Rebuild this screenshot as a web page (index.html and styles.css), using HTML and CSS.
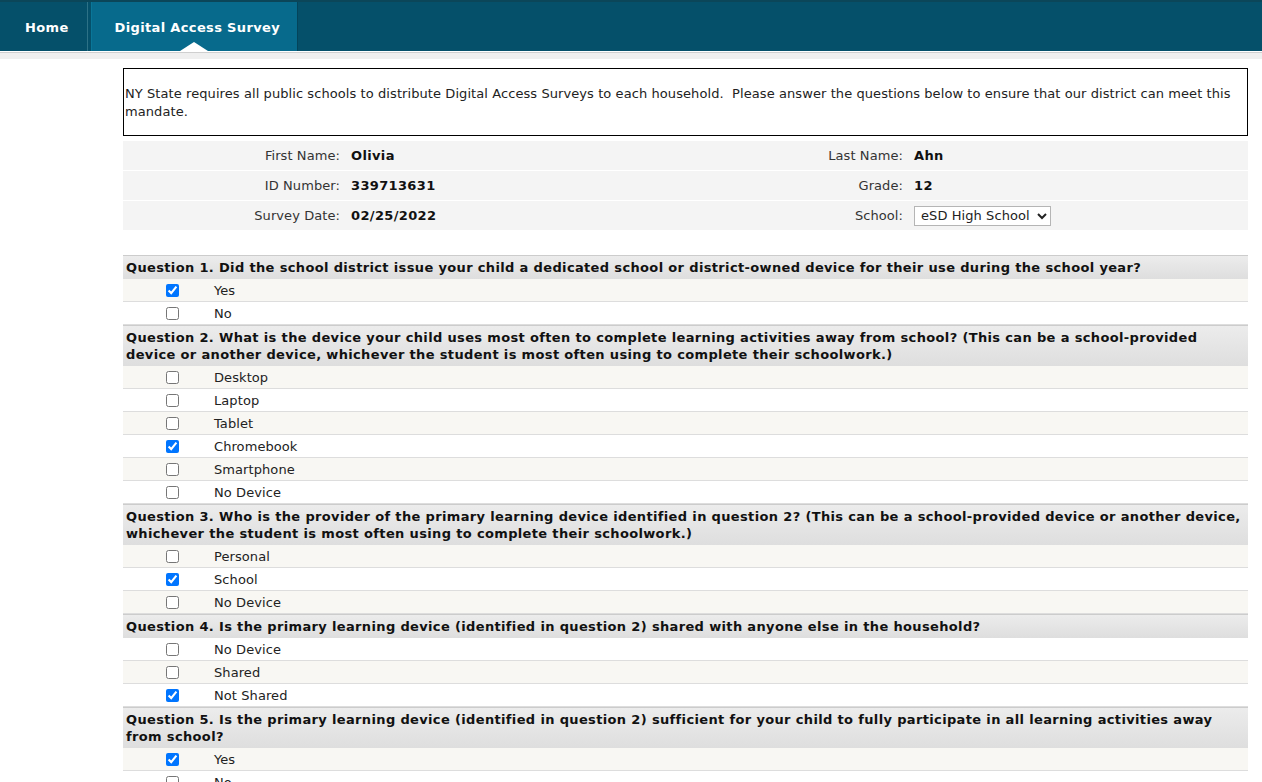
FILE: index.html
```html
<!DOCTYPE html>
<html lang="en">
<head>
  <meta charset="UTF-8" />
  <title>Digital Access Survey</title>
  <link rel="stylesheet" href="styles.css">
</head>
<body>
  <div class="top-nav">
    <div class="nav-tab">Home</div>
    <div class="nav-tab current">Digital Access Survey</div>
  </div>
  <div class="sub-bar"></div>

  <div class="content">
    <div class="intro">
      NY State requires all public schools to distribute Digital Access Surveys to each household.&nbsp; Please answer the questions below to ensure that our district can meet this mandate.
    </div>

    <div class="student-info">
      <div class="info-label">First Name:</div><div class="info-value">Olivia</div>
      <div class="info-label">Last Name:</div><div class="info-value">Ahn</div>
      <div class="info-label">ID Number:</div><div class="info-value">339713631</div>
      <div class="info-label">Grade:</div><div class="info-value">12</div>
      <div class="info-label">Survey Date:</div><div class="info-value">02/25/2022</div>
      <div class="info-label">School:</div>
      <div class="info-value">
        <select class="school-select">
          <option>eSD High School</option>
        </select>
      </div>
    </div>

    <div class="survey">
      <div class="question">Question 1. Did the school district issue your child a dedicated school or district-owned device for their use during the school year?</div>
      <label class="answer"><span class="box"><input type="checkbox" checked></span><span>Yes</span></label>
      <label class="answer"><span class="box"><input type="checkbox"></span><span>No</span></label>

      <div class="question">Question 2. What is the device your child uses most often to complete learning activities away from school? (This can be a school-provided device or another device, whichever the student is most often using to complete their schoolwork.)</div>
      <label class="answer"><span class="box"><input type="checkbox"></span><span>Desktop</span></label>
      <label class="answer"><span class="box"><input type="checkbox"></span><span>Laptop</span></label>
      <label class="answer"><span class="box"><input type="checkbox"></span><span>Tablet</span></label>
      <label class="answer"><span class="box"><input type="checkbox" checked></span><span>Chromebook</span></label>
      <label class="answer"><span class="box"><input type="checkbox"></span><span>Smartphone</span></label>
      <label class="answer"><span class="box"><input type="checkbox"></span><span>No Device</span></label>

      <div class="question">Question 3. Who is the provider of the primary learning device identified in question 2? (This can be a school-provided device or another device, whichever the student is most often using to complete their schoolwork.)</div>
      <label class="answer"><span class="box"><input type="checkbox"></span><span>Personal</span></label>
      <label class="answer"><span class="box"><input type="checkbox" checked></span><span>School</span></label>
      <label class="answer"><span class="box"><input type="checkbox"></span><span>No Device</span></label>

      <div class="question">Question 4. Is the primary learning device (identified in question 2) shared with anyone else in the household?</div>
      <label class="answer"><span class="box"><input type="checkbox"></span><span>No Device</span></label>
      <label class="answer"><span class="box"><input type="checkbox"></span><span>Shared</span></label>
      <label class="answer"><span class="box"><input type="checkbox" checked></span><span>Not Shared</span></label>

      <div class="question">Question 5. Is the primary learning device (identified in question 2) sufficient for your child to fully participate in all learning activities away from school?</div>
      <label class="answer"><span class="box"><input type="checkbox" checked></span><span>Yes</span></label>
      <label class="answer"><span class="box"><input type="checkbox"></span><span>No</span></label>
    </div>
  </div>
</body>
</html>
```

FILE: styles.css
```css
* {
  box-sizing: border-box;
}

body {
  margin: 0;
  font-family: "DejaVu Sans", Verdana, sans-serif;
  font-size: 13px;
  letter-spacing: 0.08px;
  color: #222;
  background-color: #fff;
}

.top-nav {
  display: flex;
  height: 52px;
  background-color: #05506a;
  border-top: 2px solid #0b4659;
  border-bottom: 1px solid #fff;
}

.nav-tab {
  position: relative;
  display: flex;
  align-items: center;
  padding: 2px 18px 0 25px;
  color: #fff;
  font-weight: bold;
  letter-spacing: 0.35px;
  border-right: 1px solid #2d7287;
}

.nav-tab.current {
  margin-left: 3px;
  padding: 2px 17px 0 23px;
  background-color: #076a8c;
  border-left: 1px solid #0a7698;
  border-right: 1px solid #04445a;
}

.nav-tab.current::after {
  content: "";
  position: absolute;
  left: 50%;
  bottom: 0;
  margin-left: -14px;
  border-left: 14px solid transparent;
  border-right: 14px solid transparent;
  border-bottom: 9px solid #fff;
}

.sub-bar {
  height: 7px;
  background-color: #efefef;
  border-top: 1px solid #cfcfcf;
}

.content {
  width: 1125px;
  margin: 9px 0 0 123px;
}

.intro {
  border: 1px solid #000;
  padding: 16px 12px 13px 1px;
  line-height: 18px;
  min-height: 68px;
}

.student-info {
  display: grid;
  grid-template-columns: 220px 1fr 120px 342px;
  grid-auto-rows: 29px;
  row-gap: 1px;
  margin-top: 5px;
}

.info-label,
.info-value {
  display: flex;
  align-items: center;
  background-color: #f4f4f4;
}

.info-label {
  justify-content: flex-end;
  padding-right: 3px;
  color: #333;
}

.info-value {
  padding-left: 8px;
  font-weight: bold;
  letter-spacing: 0.35px;
  color: #111;
}

.school-select {
  font-family: inherit;
  font-size: 13px;
  letter-spacing: 0.08px;
  height: 20px;
  padding: 0 4px 0 2px;
  color: #222;
  background-color: #fff;
  border: 1px solid #b5b5b5;
  border-radius: 0;
}

.survey {
  margin-top: 25px;
}

.question {
  padding: 3px 3px 3px;
  line-height: 17px;
  font-weight: bold;
  letter-spacing: 0.35px;
  color: #111;
  background: linear-gradient(#ececec, #dedede);
  border-top: 1px solid #cccccc;
}

.answer {
  display: grid;
  grid-template-columns: 91px 1fr;
  align-items: center;
  height: 23px;
  border-bottom: 1px solid #dddddd;
  background-color: #f8f7f3;
}

.answer:nth-of-type(even) {
  background-color: #fff;
}

.answer:last-child {
  border-bottom: 0;
}

.box {
  display: flex;
  padding-left: 43px;
}

.box input {
  width: 13px;
  height: 13px;
  margin: 0;
}
```
